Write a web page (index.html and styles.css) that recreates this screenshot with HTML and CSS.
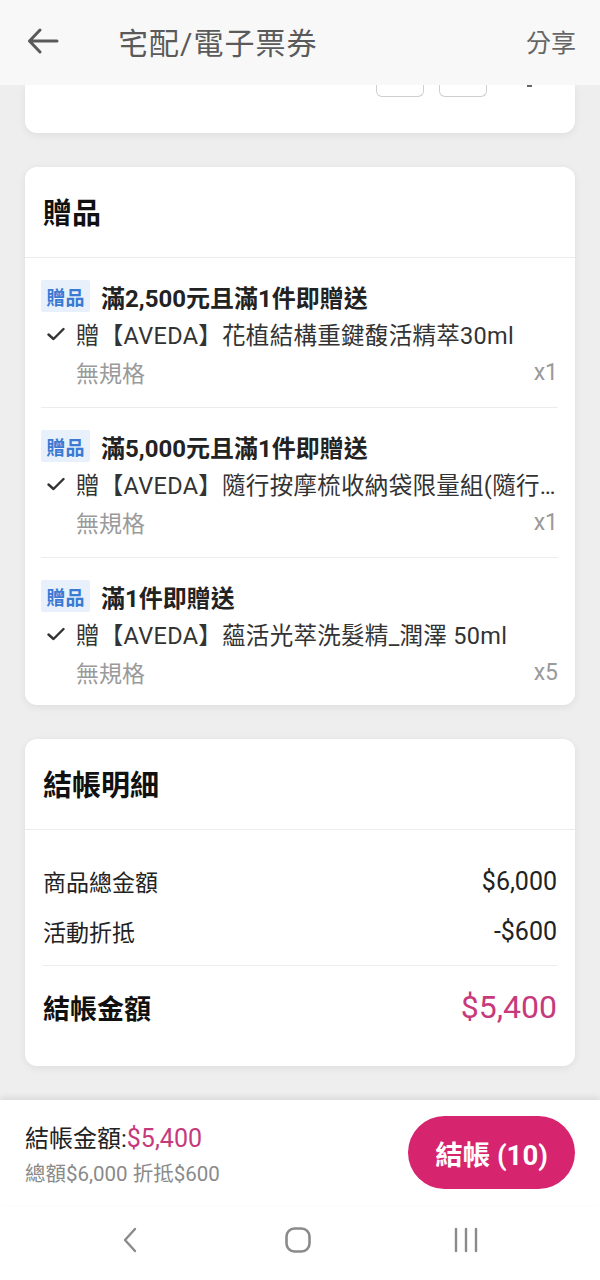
FILE: index.html
```html
<!DOCTYPE html>
<html lang="zh-Hant">
<head>
<meta charset="utf-8">
<title>宅配/電子票券</title>
<link rel="stylesheet" href="styles.css">
</head>
<body>
<header class="topbar">
  <svg class="back" viewBox="0 0 32 26" width="32" height="26"><path d="M30 13H3M13 2L2.5 13L13 24" fill="none" stroke="#5a5a5a" stroke-width="3" stroke-linecap="round" stroke-linejoin="round"/></svg>
  <h1 class="title">宅配/電子票券</h1>
  <span class="share">分享</span>
</header>
<main class="content">
  <section class="card partial">
    <div class="qty-box"></div>
    <div class="qty-box"></div>
    <span class="qty-dash"></span>
  </section>

  <section class="card">
    <div class="card-head">贈品</div>
    <div class="gift">
      <div class="gift-title"><span class="tag">贈品</span>滿2,500元且滿1件即贈送</div>
      <div class="gift-name"><svg class="check" viewBox="0 0 18 14" width="18" height="14"><path d="M1.5 7.5L6.5 12L16.5 2" fill="none" stroke="#333" stroke-width="2.4" stroke-linecap="round" stroke-linejoin="round"/></svg><span class="ellip">贈【AVEDA】花植結構重鍵馥活精萃30ml</span></div>
      <div class="gift-spec"><span>無規格</span><span>x1</span></div>
    </div>
    <div class="gift">
      <div class="gift-title"><span class="tag">贈品</span>滿5,000元且滿1件即贈送</div>
      <div class="gift-name"><svg class="check" viewBox="0 0 18 14" width="18" height="14"><path d="M1.5 7.5L6.5 12L16.5 2" fill="none" stroke="#333" stroke-width="2.4" stroke-linecap="round" stroke-linejoin="round"/></svg><span class="ellip">贈【AVEDA】隨行按摩梳收納袋限量組(隨行…</span></div>
      <div class="gift-spec"><span>無規格</span><span>x1</span></div>
    </div>
    <div class="gift last">
      <div class="gift-title"><span class="tag">贈品</span>滿1件即贈送</div>
      <div class="gift-name"><svg class="check" viewBox="0 0 18 14" width="18" height="14"><path d="M1.5 7.5L6.5 12L16.5 2" fill="none" stroke="#333" stroke-width="2.4" stroke-linecap="round" stroke-linejoin="round"/></svg><span class="ellip">贈【AVEDA】蘊活光萃洗髮精_潤澤 50ml</span></div>
      <div class="gift-spec"><span>無規格</span><span>x5</span></div>
    </div>
  </section>

  <section class="card">
    <div class="card-head">結帳明細</div>
    <div class="summary">
      <div class="row"><span>商品總金額</span><span class="num">$6,000</span></div>
      <div class="row"><span>活動折抵</span><span class="num">-$600</span></div>
      <div class="row total"><span>結帳金額</span><span class="num pink">$5,400</span></div>
    </div>
  </section>
</main>
<footer class="checkout">
  <div class="sum">
    <div class="sum-main">結帳金額:<span class="pink">$5,400</span></div>
    <div class="sum-sub">總額$6,000 折抵$600</div>
  </div>
  <button class="pay">結帳 (10)</button>
</footer>
<nav class="sysnav">
  <svg viewBox="0 0 16 26" width="16" height="26"><path d="M13 2L3 13L13 24" fill="none" stroke="#8a8a8a" stroke-width="2.4" stroke-linecap="round" stroke-linejoin="round"/></svg>
  <svg viewBox="0 0 28 28" width="28" height="28"><rect x="2.5" y="2.5" width="23" height="23" rx="8" fill="none" stroke="#8a8a8a" stroke-width="2.6"/></svg>
  <svg viewBox="0 0 26 26" width="26" height="26"><path d="M3 2V24M13 2V24M23 2V24" fill="none" stroke="#8a8a8a" stroke-width="2.4" stroke-linecap="round"/></svg>
</nav>
</body>
</html>
```
FILE: styles.css
```css
* { box-sizing: border-box; }
html, body { margin: 0; padding: 0; }
body {
  width: 600px;
  height: 1280px;
  overflow: hidden;
  display: flex;
  flex-direction: column;
  background: #eeeeee;
  font-family: Roboto, "Noto Sans CJK TC", "Noto Sans", sans-serif;
  color: #222;
}
.topbar {
  flex: none;
  height: 85px;
  background: #f8f8f8;
  display: flex;
  align-items: center;
  padding: 0 24px 4px 27px;
  position: relative;
  z-index: 2;
}
.back { flex: none; }
.title {
  margin: 0 0 0 59px;
  font-size: 30px;
  font-weight: 400;
  color: #5a5a5a;
  flex: 1;
  letter-spacing: 1px;
}
.share { font-size: 25px; color: #666; }

.content {
  flex: 1;
  overflow: hidden;
  padding: 0 25px;
  display: flex;
  flex-direction: column;
  gap: 34px;
}
.card {
  background: #fff;
  border-radius: 12px;
  box-shadow: 0 2px 8px rgba(0,0,0,0.07);
  flex: none;
}
.partial {
  height: 48px;
  border-radius: 0 0 12px 12px;
  display: flex;
  align-items: flex-start;
  padding-left: 351px;
  gap: 15px;
}
.qty-box {
  width: 48px;
  height: 12px;
  border: 1px solid #cfcfcf;
  border-top: none;
  border-radius: 0 0 6px 6px;
}
.qty-dash {
  width: 5px;
  height: 2px;
  background: #666;
  margin: 0 0 0 25px;
}
.card-head {
  height: 91px;
  display: flex;
  align-items: center;
  padding: 0 18px 2px;
  font-size: 29px;
  font-weight: 700;
  color: #111;
  border-bottom: 1px solid #ececec;
}
.gift {
  margin: 0 17px 0 16px;
  padding: 19px 0 16px;
  border-bottom: 1px solid #ececec;
}
.gift.last { border-bottom: none; padding-bottom: 14px; }
.gift-title {
  height: 38px;
  display: flex;
  align-items: center;
  font-size: 24px;
  font-weight: 700;
  color: #222;
}
.tag {
  display: inline-flex;
  align-items: center;
  justify-content: center;
  width: 49px;
  height: 32px;
  margin-right: 11px;
  background: #e7f0fb;
  color: #3a7ad3;
  font-size: 19px;
  font-weight: 700;
  border-radius: 2px;
}
.gift-name {
  height: 38px;
  display: flex;
  align-items: center;
  font-size: 23.5px;
  color: #333;
  min-width: 0;
}
.check { flex: none; margin: 0 11px 0 6px; }
.ellip {
  white-space: nowrap;
  overflow: hidden;
  text-overflow: ellipsis;
  min-width: 0;
  letter-spacing: 0.3px;
}
.gift-spec {
  height: 38px;
  display: flex;
  align-items: center;
  justify-content: space-between;
  padding-left: 35px;
  font-size: 23px;
  color: #9a9a9a;
}

.summary { padding: 26px 18px 38px; }
.row {
  height: 50px;
  display: flex;
  align-items: center;
  justify-content: space-between;
  font-size: 23px;
  color: #222;
}
.row .num { font-size: 25px; color: #222; }
.row.total {
  height: 42px;
  margin-top: 9px;
  border-top: 1px solid #ececec;
  box-sizing: content-box;
  padding-top: 20px;
  font-size: 27px;
  font-weight: 700;
  color: #111;
}
.row.total .num { font-size: 32px; font-weight: 400; }
.pink { color: #c63a7c !important; }

.checkout {
  flex: none;
  height: 105px;
  background: #fff;
  box-shadow: 0 -3px 6px rgba(0,0,0,0.08);
  display: flex;
  align-items: center;
  justify-content: space-between;
  padding: 0 25px;
  position: relative;
  z-index: 1;
}
.sum { margin-top: 4px; }
.sum-main { font-size: 24px; color: #222; line-height: 38px; }
.sum-main .pink { font-size: 25px; }
.sum-sub { font-size: 20.5px; color: #8a8a8a; line-height: 32px; }
.pay {
  width: 167px;
  height: 73px;
  border: none;
  border-radius: 37px;
  background: #d6246e;
  color: #fff;
  font-family: Roboto, "Noto Sans CJK TC", sans-serif;
  font-size: 27.5px;
  font-weight: 700;
}
.sysnav {
  flex: none;
  height: 75px;
  background: #fff;
  display: grid;
  grid-template-columns: repeat(3, 60px);
  column-gap: 108px;
  justify-items: center;
  align-items: center;
  padding: 0 0 5px 100px;
}
```
